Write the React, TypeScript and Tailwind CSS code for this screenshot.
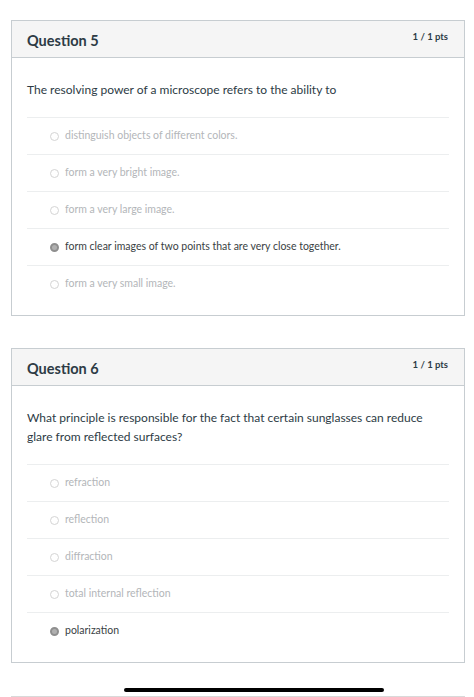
import React from 'react'

type Option = { label: string; selected?: boolean }

function Radio({ selected }: { selected?: boolean }) {
  if (selected) {
    return (
      <span className="w-[9px] h-[9px] rounded-full bg-[#b0b0b0] border-2 border-[#8f8f8f] shrink-0" />
    )
  }
  return <span className="w-[9px] h-[9px] rounded-full border border-[#d4d4d4] bg-white shrink-0" />
}

function QuestionCard({
  title,
  text,
  options,
}: {
  title: string
  text: React.ReactNode
  options: Option[]
}) {
  return (
    <div className="ml-[11px] mr-[9px] border border-[#c7cdd1] bg-white">
      <div className="flex justify-between items-start bg-[#f5f5f5] border-b border-[#c7cdd1] h-[37px] pl-[15px] pr-[16px]">
        <h2 className="text-[14.5px] font-bold text-[#2d3b45] mt-[10px] leading-[20px]">{title}</h2>
        <span className="text-[9.5px] font-bold text-[#2d3b45] mt-[10px] leading-[12px]">1 / 1 pts</span>
      </div>
      <div className="px-[15px] pt-[22px] pb-[13px]">
        <p className="text-[12px] text-[#2d3b45] leading-[19px] mb-[18px]">{text}</p>
        <div>
          {options.map((o, i) => (
            <div key={i} className="border-t border-[#eceeef] h-[37px] flex items-center gap-[6px] pl-[23px]">
              <Radio selected={o.selected} />
              <span
                className={
                  o.selected
                    ? 'text-[10.5px] text-[#3a3f44]'
                    : 'text-[10.5px] text-[#b3b6b9]'
                }
              >
                {o.label}
              </span>
            </div>
          ))}
        </div>
      </div>
    </div>
  )
}

export default function App() {
  return (
    <div className="w-[474px] h-[697px] bg-white overflow-hidden pt-[20px] font-['Lato',sans-serif]">
      <QuestionCard
        title="Question 5"
        text="The resolving power of a microscope refers to the ability to"
        options={[
          { label: 'distinguish objects of different colors.' },
          { label: 'form a very bright image.' },
          { label: 'form a very large image.' },
          { label: 'form clear images of two points that are very close together.', selected: true },
          { label: 'form a very small image.' },
        ]}
      />
      <div className="h-[32px]" />
      <QuestionCard
        title="Question 6"
        text="What principle is responsible for the fact that certain sunglasses can reduce glare from reflected surfaces?"
        options={[
          { label: 'refraction' },
          { label: 'reflection' },
          { label: 'diffraction' },
          { label: 'total internal reflection' },
          { label: 'polarization', selected: true },
        ]}
      />
      <div className="mt-[25px] pl-[124px]">
        <div className="w-[260px] h-[4px] rounded-full bg-black" />
      </div>
      <div className="ml-[11px] mr-[9px] mt-[4px] h-[3px] bg-[#d9d9d9]" />
    </div>
  )
}
